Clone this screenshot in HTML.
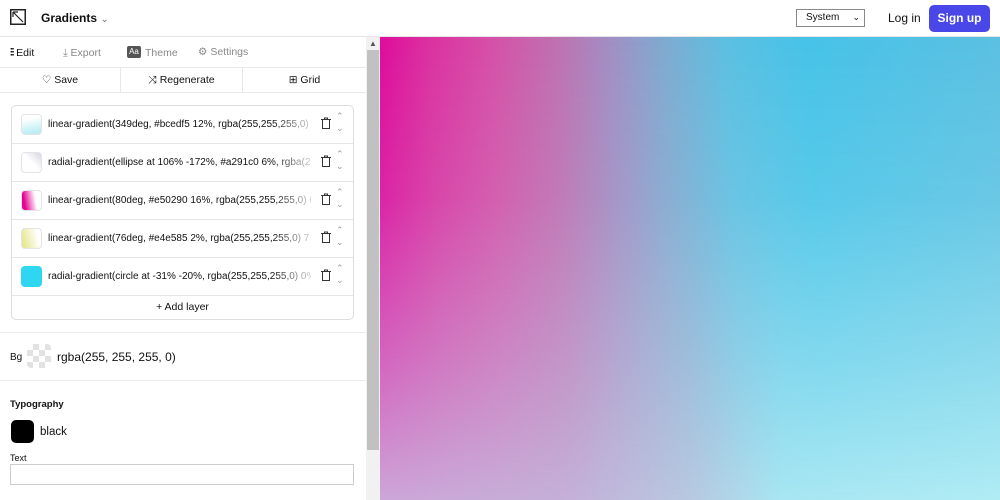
<!DOCTYPE html>
<html><head><style>
*{box-sizing:border-box;margin:0;padding:0}
body{width:1000px;height:500px;overflow:hidden;font-family:"Liberation Sans",sans-serif;color:#111;background:#fff;position:relative;font-size:11px}
.hdr{position:absolute;left:0;top:0;width:1000px;height:37px;border-bottom:1px solid #e5e5e5;background:#fff}
.abs{position:absolute}
.prev{position:absolute;left:380px;top:37px;width:620px;height:463px;
background:linear-gradient(88deg,#e0009a 0%,#dc30a0 10%,#d650a8 20%,#c070b0 30%,#a090c4 39%,#80aad0 47%,#5cc0e2 57%,#46c3e8 70%,#5cc0e2 100%);}
.ov{position:absolute;left:380px;top:37px;width:620px;height:463px;
background:linear-gradient(90deg,#cca6d8 0%,#c4b0d8 30%,#b8c8e0 50%,#a8e6f2 65%,#b0ecf4 100%);
-webkit-mask-image:linear-gradient(to bottom,rgba(0,0,0,0) 0%,rgba(0,0,0,.18) 35%,rgba(0,0,0,.6) 70%,#000 100%);mask-image:linear-gradient(to bottom,rgba(0,0,0,0) 0%,rgba(0,0,0,.18) 35%,rgba(0,0,0,.6) 70%,#000 100%)}
.tabs{position:absolute;left:0;top:38px;width:366px;height:30px;border-bottom:1px solid #e8e8e8}
.btns{position:absolute;left:0;top:68px;width:366px;height:25px;border-bottom:1px solid #e8e8e8}
.btns div{position:absolute;top:0;height:25px;line-height:25px;text-align:center;font-size:10.5px}
.card{position:absolute;left:11px;top:105px;width:343px;height:215px;border:1px solid #ddd;border-radius:5px}
.row{position:absolute;left:0;width:341px;height:38px;border-bottom:1px solid #e5e5e5}
.sw{position:absolute;left:9px;top:8px;width:21px;height:21px;border-radius:4px;border:1px solid #e4e4e4}
.txt{position:absolute;left:36px;top:13px;font-size:10px;white-space:nowrap;width:263px;overflow:hidden;-webkit-mask-image:linear-gradient(to right,#000 85%,rgba(0,0,0,.2) 100%)}
.trash{position:absolute;left:309px;top:11px}
.ar{position:absolute;left:324px;color:#999;font-size:9px}
</style></head><body>
<div class="hdr">
<svg class="abs" style="left:10px;top:9px" width="16" height="16" viewBox="0 0 16 16"><rect x="0.75" y="0.75" width="14.5" height="14.5" fill="none" stroke="#222" stroke-width="1.5"/><path d="M3 3 L13 13 M3 3 L3 8 M3 3 L8 3" stroke="#222" stroke-width="1.2" fill="none"/></svg>
<div class="abs" style="left:41px;top:11px;font-weight:bold;font-size:12px">Gradients <span style="font-weight:normal;color:#777;font-size:10px">&#8964;</span></div>
<div class="abs" style="left:796px;top:9px;width:69px;height:18px;border:1px solid #888;font-size:10px;line-height:16px;padding-left:9px">System<span style="position:absolute;right:4px;top:-1px;font-size:9px">&#8964;</span></div>
<div class="abs" style="left:888px;top:11px;font-size:12px">Log in</div>
<div class="abs" style="left:929px;top:5px;width:61px;height:27px;background:#4a47e8;border-radius:5px;color:#fff;font-weight:bold;font-size:12px;text-align:center;line-height:27px">Sign up</div>
</div>
<div class="tabs">
<div class="abs" style="left:10px;top:9px;font-size:10.5px"><b style="letter-spacing:-1px">⫶⫶</b> Edit</div>
<div class="abs" style="left:63px;top:9px;font-size:10.5px;color:#888">⤓ Export</div>
<div class="abs" style="left:127px;top:8px;width:14px;height:12px;background:#555;color:#fff;font-size:8px;text-align:center;line-height:12px;border-radius:2px">Aa</div>
<div class="abs" style="left:145px;top:9px;font-size:10.5px;color:#888">Theme</div>
<div class="abs" style="left:198px;top:8px;font-size:10.5px;color:#888">⚙ Settings</div>
</div>
<div class="btns">
<div style="left:0;width:121px;border-right:1px solid #e8e8e8">♡ Save</div>
<div style="left:121px;width:122px;border-right:1px solid #e8e8e8">⤨ Regenerate</div>
<div style="left:243px;width:123px">⊞ Grid</div>
</div>
<div class="card">
<div class="row" style="top:0"><div class="sw" style="background:linear-gradient(349deg,#bcedf5 12%,#fff 80%)"></div><div class="txt">linear-gradient(349deg, #bcedf5 12%, rgba(255,255,255,0) 6</div><svg class="trash" width="10" height="12" viewBox="0 0 10 12"><path d="M0 2.5h10M3.5 2.5V1h3v1.5M1.5 2.5v9h7v-9" stroke="#333" fill="none"/></svg><div class="ar" style="top:5px">&#8963;</div><div class="ar" style="top:17px">&#8964;</div></div>
<div class="row" style="top:38px"><div class="sw" style="background:linear-gradient(45deg,#fff 50%,#d8d6e4)"></div><div class="txt">radial-gradient(ellipse at 106% -172%, #a291c0 6%, rgba(25</div><svg class="trash" width="10" height="12" viewBox="0 0 10 12"><path d="M0 2.5h10M3.5 2.5V1h3v1.5M1.5 2.5v9h7v-9" stroke="#333" fill="none"/></svg><div class="ar" style="top:5px">&#8963;</div><div class="ar" style="top:17px">&#8964;</div></div>
<div class="row" style="top:76px"><div class="sw" style="background:linear-gradient(80deg,#e50290 16%,#fff 70%)"></div><div class="txt">linear-gradient(80deg, #e50290 16%, rgba(255,255,255,0) 6</div><svg class="trash" width="10" height="12" viewBox="0 0 10 12"><path d="M0 2.5h10M3.5 2.5V1h3v1.5M1.5 2.5v9h7v-9" stroke="#333" fill="none"/></svg><div class="ar" style="top:5px">&#8963;</div><div class="ar" style="top:17px">&#8964;</div></div>
<div class="row" style="top:114px"><div class="sw" style="background:linear-gradient(76deg,#e4e585 2%,#fff 80%)"></div><div class="txt">linear-gradient(76deg, #e4e585 2%, rgba(255,255,255,0) 7</div><svg class="trash" width="10" height="12" viewBox="0 0 10 12"><path d="M0 2.5h10M3.5 2.5V1h3v1.5M1.5 2.5v9h7v-9" stroke="#333" fill="none"/></svg><div class="ar" style="top:5px">&#8963;</div><div class="ar" style="top:17px">&#8964;</div></div>
<div class="row" style="top:152px"><div class="sw" style="background:#2fd6f2;border-color:#2fd6f2"></div><div class="txt">radial-gradient(circle at -31% -20%, rgba(255,255,255,0) 0%</div><svg class="trash" width="10" height="12" viewBox="0 0 10 12"><path d="M0 2.5h10M3.5 2.5V1h3v1.5M1.5 2.5v9h7v-9" stroke="#333" fill="none"/></svg><div class="ar" style="top:5px">&#8963;</div><div class="ar" style="top:17px">&#8964;</div></div>
<div class="abs" style="left:0;top:195px;width:341px;text-align:center;font-size:10.5px">+ Add layer</div>
</div>
<div class="abs" style="left:0;top:332px;width:366px;border-top:1px solid #ececec"></div>
<div class="abs" style="left:10px;top:352px;font-size:10px">Bg</div>
<div class="abs" style="left:27px;top:344px;width:24px;height:24px;border-radius:4px;background:repeating-conic-gradient(#e2e2e2 0 25%,#fff 0 50%) 0 0/12px 12px"></div>
<div class="abs" style="left:57px;top:350px;font-size:12px">rgba(255, 255, 255, 0)</div>
<div class="abs" style="left:0;top:380px;width:366px;border-top:1px solid #ececec"></div>
<div class="abs" style="left:10px;top:399px;font-size:9.5px;font-weight:bold">Typography</div>
<div class="abs" style="left:11px;top:420px;width:23px;height:23px;border-radius:5px;background:#000"></div>
<div class="abs" style="left:40px;top:426px;font-size:11.5px">black</div>
<div class="abs" style="left:10px;top:453px;font-size:9px">Text</div>
<div class="abs" style="left:10px;top:464px;width:344px;height:21px;border:1px solid #ccc"></div>
<div class="abs" style="left:366px;top:37px;width:14px;height:463px;background:#f1f1f1"></div>
<div class="abs" style="left:367px;top:50px;width:12px;height:400px;background:#c1c1c1"></div>
<div class="abs" style="left:369px;top:39px;font-size:8px;color:#555">&#9650;</div>
<div class="prev"></div>
<div class="ov"></div>
</body></html>
